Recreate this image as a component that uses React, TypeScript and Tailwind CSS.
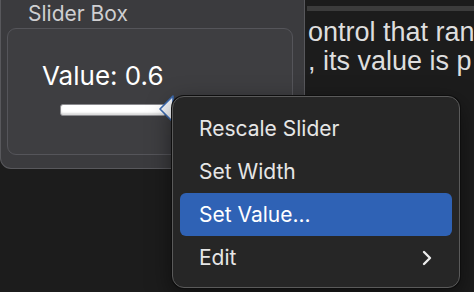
import React from 'react';

const font = { fontFamily: 'Inter, "Noto Sans", sans-serif' };

function SliderThumb() {
  return (
    <svg width="16" height="28" viewBox="0 0 16 28" className="absolute left-[157px] top-[95px]">
      <path d="M15 1 L2 14 L15 27 Z" fill="#f4f6fa" stroke="#3d6bb0" strokeWidth="1.6" strokeLinejoin="round" />
    </svg>
  );
}

function MenuItem({ label, active, submenu }: { label: string; active?: boolean; submenu?: boolean }) {
  return (
    <div
      className={`flex items-center justify-between h-[43px] pl-[19px] pr-[20px] rounded-[6px] text-[21px] ${
        active ? 'bg-[#2f62b5] text-white' : 'text-[#e6e6e6]'
      }`}
    >
      <span>{label}</span>
      {submenu && (
        <svg width="10" height="16" viewBox="0 0 10 16">
          <path d="M2 2 L8 8 L2 14" fill="none" stroke="#ececec" strokeWidth="2.4" strokeLinecap="round" strokeLinejoin="round" />
        </svg>
      )}
    </div>
  );
}

export default function App() {
  return (
    <div className="relative w-[474px] h-[292px] bg-[#1c1c1c] overflow-hidden flex" style={font}>
      {/* window with the slider box */}
      <div className="relative z-10 w-[305px] h-[169px] shrink-0 bg-[#3b3b3e] border-r border-b border-l border-[#58585c] rounded-bl-[11px] px-[6px] pt-[2px]">
        <div className="pl-[21px] text-[21px] leading-[24px] text-[#cfcfd1]">Slider Box</div>
        <div className="mt-[2px] h-[127px] w-[286px] rounded-[9px] border border-[#55555a] bg-[#3e3e41] pl-[34px] pt-[32px]">
          <div className="text-[26px] leading-[30px] text-white">Value: 0.6</div>
          <div className="mt-[13px] ml-[18px] w-[106px] h-[12px] rounded-[3px] bg-white border border-[#8a8a8e] shadow-[inset_0_-2px_2px_rgba(0,0,0,0.15)]" />
        </div>
        <SliderThumb />
      </div>

      {/* document text behind */}
      <div className="flex-1 overflow-hidden pt-[6px]">
        <div className="h-[5px] bg-[#3c3c3c] ml-[2px]" />
        <div
          className="mt-[7px] pl-[3px] text-[27px] leading-[29px] text-[#dedede] whitespace-nowrap"
          style={{ fontFamily: '"Liberation Sans", Arial, sans-serif' }}
        >
          <div>ontrol that ran</div>
          <div>, its value is p</div>
        </div>
      </div>

      {/* context menu */}
      <div className="absolute z-20 left-[172px] top-[96px] w-[288px] h-[192px] rounded-[12px] bg-[#262626] border border-[#5a5a5a] shadow-[0_0_0_1px_#0e0e0e,0_8px_24px_rgba(0,0,0,0.5)] pt-[10px] pb-[7px] px-[7px]">
        <MenuItem label="Rescale Slider" />
        <MenuItem label="Set Width" />
        <MenuItem label="Set Value..." active />
        <MenuItem label="Edit" submenu />
      </div>
    </div>
  );
}
